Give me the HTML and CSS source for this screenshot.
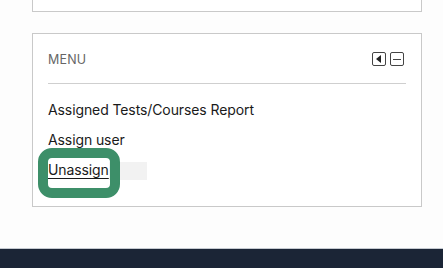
FILE: index.html
```html
<!DOCTYPE html>
<html lang="en">
<head>
  <meta charset="UTF-8" />
  <meta name="viewport" content="width=device-width, initial-scale=1.0"/>
  <title>Menu</title>
  <link rel="stylesheet" href="styles.css">
</head>
<body>
  <div class="page">
    <div class="card card-tail"></div>

    <div class="card menu">
      <div class="menu-head">
        <span class="menu-title">MENU</span>
        <div class="menu-tools">
          <span class="tool-btn"><span class="tri"></span></span>
          <span class="tool-btn"><span class="dash"></span></span>
        </div>
      </div>
      <ul class="menu-list">
        <li><a href="#">Assigned Tests/Courses Report</a></li>
        <li><a href="#">Assign user</a></li>
        <li class="current">
          <a href="#" class="active">Unassign</a><span class="ghost"></span>
          <span class="focus-ring"></span>
        </li>
      </ul>
    </div>
  </div>

  <footer class="footer"></footer>
</body>
</html>
```

FILE: styles.css
```css
body {
  margin: 0;
  background-color: #fdfdfd;
  font-family: Inter, 'Liberation Sans', sans-serif;
}

.page {
  padding: 0 21px 0 32px;
  display: flex;
  flex-direction: column;
  gap: 21px;
}

.card {
  border: 1px solid #c9c9c9;
  background-color: #fff;
}

.card-tail {
  border-top: none;
  height: 12px;
  box-sizing: border-box;
}

.menu {
  height: 174px;
  box-sizing: border-box;
  padding: 17px 15px 20px 15px;
}

.menu-head {
  display: flex;
  align-items: center;
  justify-content: space-between;
  height: 16px;
  padding-bottom: 16px;
  border-bottom: 1px solid #cfcfcf;
}

.menu-title {
  font-size: 12.5px;
  color: #666;
  letter-spacing: 0.2px;
}

.menu-tools {
  display: flex;
  gap: 4px;
  margin-right: 2px;
}

.tool-btn {
  width: 14px;
  height: 14px;
  box-sizing: border-box;
  border: 1px solid #444;
  border-radius: 2px;
  display: flex;
  align-items: center;
  justify-content: center;
}

.tri {
  width: 0;
  height: 0;
  border-top: 4px solid transparent;
  border-bottom: 4px solid transparent;
  border-right: 5px solid #222;
  margin-left: -1px;
}

.dash {
  width: 8px;
  height: 1px;
  background-color: #444;
}

.menu-list {
  list-style: none;
  margin: 11px 0 0 0;
  padding: 0;
}

.menu-list li {
  height: 30px;
  line-height: 30px;
  font-size: 14px;
  letter-spacing: -0.1px;
  position: relative;
}

.menu-list a {
  color: #1a1a1a;
  text-decoration: none;
}

.menu-list a.active {
  text-decoration: underline;
  text-underline-offset: 3px;
}

.ghost {
  display: inline-block;
  width: 38px;
  height: 18px;
  vertical-align: middle;
  background-color: #f2f2f2;
}

.focus-ring {
  position: absolute;
  left: -10px;
  top: -7px;
  width: 82px;
  height: 50px;
  box-sizing: border-box;
  border: 10px solid #3d8f69;
  border-radius: 14px;
}

.footer {
  margin-top: 41px;
  height: 20px;
  background-color: #1b2536;
  border-top: 1px solid #c5cad1;
}
```
